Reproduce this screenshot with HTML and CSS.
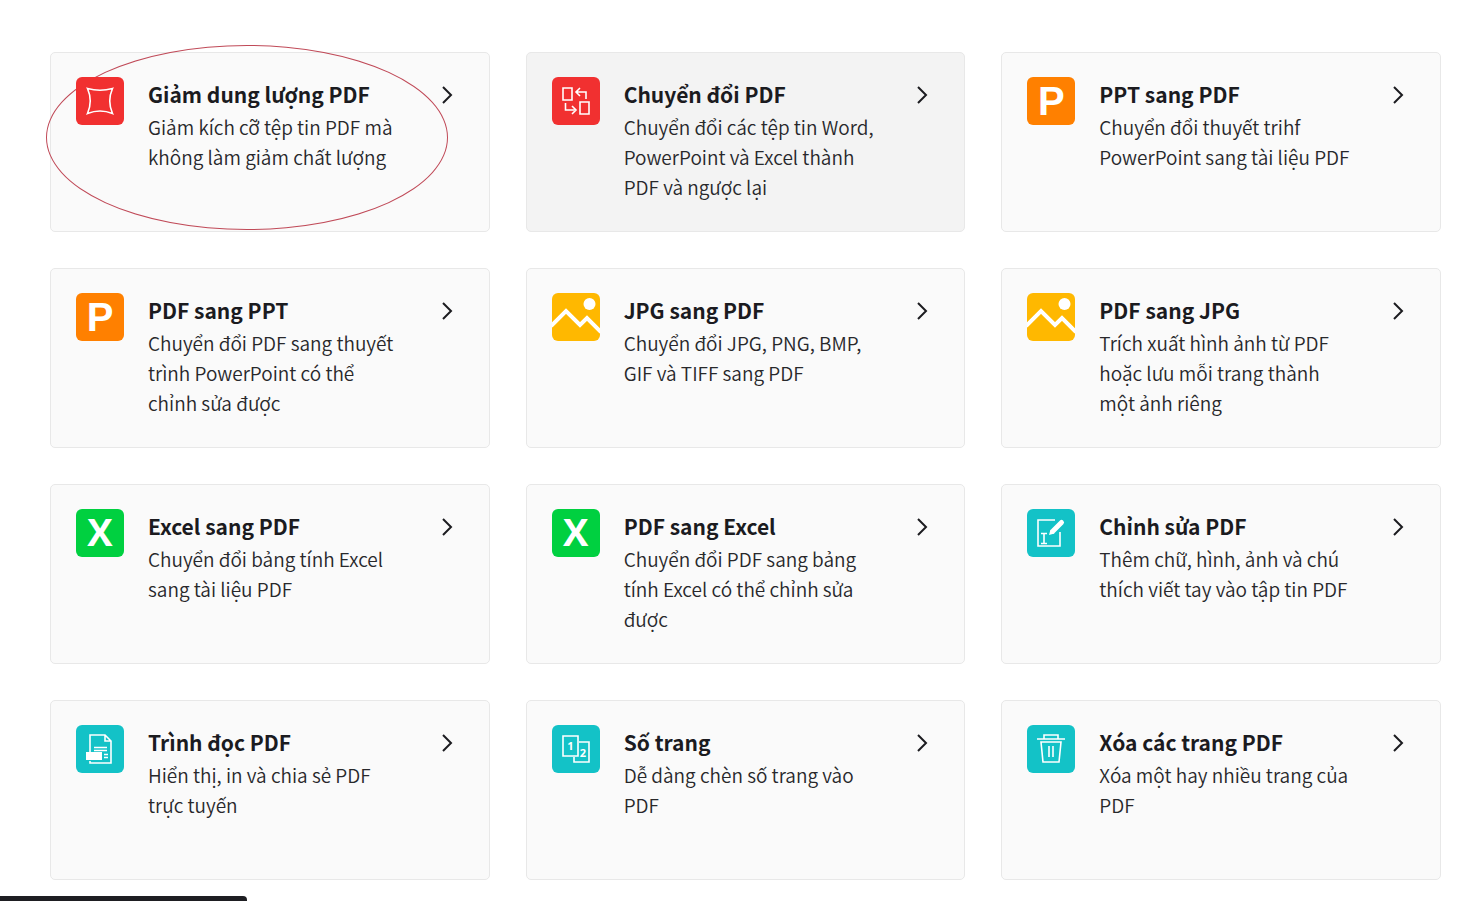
FILE: index.html
```html
<!DOCTYPE html>
<html lang="vi">
<head>
<meta charset="UTF-8">
<meta name="viewport" content="width=device-width, initial-scale=1.0">
<title>PDF</title>
<link rel="stylesheet" href="styles.css">
</head>
<body>
<svg class="sprite" aria-hidden="true">
  <symbol id="arrow" viewBox="0 0 12 20">
    <path d="M2 2l8 8-8 8" fill="none" stroke="#1b1b1f" stroke-width="2"/>
  </symbol>
  <symbol id="image" viewBox="0 0 48 48">
    <circle cx="37.500" cy="11" r="6" fill="#fff" stroke="none"/>
    <path d="M-1 33L14 18l14 14 7-7 14 14" stroke-width="4"/>
  </symbol>
</svg>

<main class="tools">
  <a class="tool" href="#">
    <span class="ring"></span>
    <svg class="icon red" viewBox="0 0 48 48">
      <path d="M11.500 11.500Q24 15 36.500 11.500Q31 24 36.500 36.500Q24 31.500 11.500 36.500Q17 24 11.500 11.500z"/>
    </svg>
    <div class="text">
      <h2>Giảm dung lượng PDF</h2>
      <p>Giảm kích cỡ tệp tin PDF mà không làm giảm chất lượng</p>
    </div>
    <svg class="arrow"><use href="#arrow"/></svg>
  </a>
  <a class="tool active" href="#">
    <svg class="icon red" viewBox="0 0 48 48">
      <path d="M11 11h9v12h-9zM28 25h9v12h-9zM34 22v-7h-9M28 11l-4 4 4 4M13.500 26v7h9M20 29l4 4-4 4"/>
    </svg>
    <div class="text">
      <h2>Chuyển đổi PDF</h2>
      <p>Chuyển đổi các tệp tin Word, PowerPoint và Excel thành PDF và ngược lại</p>
    </div>
    <svg class="arrow"><use href="#arrow"/></svg>
  </a>
  <a class="tool" href="#">
    <span class="icon letter wide orange">P</span>
    <div class="text">
      <h2>PPT sang PDF</h2>
      <p>Chuyển đổi thuyết trihf PowerPoint sang tài liệu PDF</p>
    </div>
    <svg class="arrow"><use href="#arrow"/></svg>
  </a>

  <a class="tool" href="#">
    <span class="icon letter wide orange">P</span>
    <div class="text">
      <h2>PDF sang PPT</h2>
      <p>Chuyển đổi PDF sang thuyết trình PowerPoint có thể chỉnh sửa được</p>
    </div>
    <svg class="arrow"><use href="#arrow"/></svg>
  </a>
  <a class="tool" href="#">
    <svg class="icon yellow"><use href="#image"/></svg>
    <div class="text">
      <h2>JPG sang PDF</h2>
      <p>Chuyển đổi JPG, PNG, BMP, GIF và TIFF sang PDF</p>
    </div>
    <svg class="arrow"><use href="#arrow"/></svg>
  </a>
  <a class="tool" href="#">
    <svg class="icon yellow"><use href="#image"/></svg>
    <div class="text">
      <h2>PDF sang JPG</h2>
      <p>Trích xuất hình ảnh từ PDF hoặc lưu mỗi trang thành một ảnh riêng</p>
    </div>
    <svg class="arrow"><use href="#arrow"/></svg>
  </a>

  <a class="tool" href="#">
    <span class="icon letter green">X</span>
    <div class="text">
      <h2>Excel sang PDF</h2>
      <p>Chuyển đổi bảng tính Excel sang tài liệu PDF</p>
    </div>
    <svg class="arrow"><use href="#arrow"/></svg>
  </a>
  <a class="tool" href="#">
    <span class="icon letter green">X</span>
    <div class="text">
      <h2>PDF sang Excel</h2>
      <p>Chuyển đổi PDF sang bảng tính Excel có thể chỉnh sửa được</p>
    </div>
    <svg class="arrow"><use href="#arrow"/></svg>
  </a>
  <a class="tool" href="#">
    <svg class="icon teal" viewBox="0 0 48 48">
      <path d="M28 11H11v26h22V23M14 24.500h6M14 34.500h6M17 24.500v10"/>
      <path d="M26 22L34.500 13.500" stroke-width="5" stroke-linecap="round"/>
      <path d="M22 26l1.500-5.500 4 4z" fill="#fff" stroke="none"/>
    </svg>
    <div class="text">
      <h2>Chỉnh sửa PDF</h2>
      <p>Thêm chữ, hình, ảnh và chú thích viết tay vào tập tin PDF</p>
    </div>
    <svg class="arrow"><use href="#arrow"/></svg>
  </a>

  <a class="tool" href="#">
    <svg class="icon teal" viewBox="0 0 48 48">
      <path d="M14 27V10h15l6 6v22H14v-2M29 10v6h6"/>
      <path d="M18 22.500h13M18 25.500h13M28 29.500h4M28 32.500h4"/>
      <path d="M10 27h16v8H10z" fill="#fff" stroke="none"/>
    </svg>
    <div class="text">
      <h2>Trình đọc PDF</h2>
      <p>Hiển thị, in và chia sẻ PDF trực tuyến</p>
    </div>
    <svg class="arrow"><use href="#arrow"/></svg>
  </a>
  <a class="tool" href="#">
    <svg class="icon teal" viewBox="0 0 48 48">
      <path d="M11 11h15v20H11zM27 17h10v20H22v-5"/>
      <text x="18.500" y="25" text-anchor="middle" class="digit">1</text>
      <text x="31" y="32" text-anchor="middle" class="digit">2</text>
    </svg>
    <div class="text">
      <h2>Số trang</h2>
      <p>Dễ dàng chèn số trang vào PDF</p>
    </div>
    <svg class="arrow"><use href="#arrow"/></svg>
  </a>
  <a class="tool" href="#">
    <svg class="icon teal" viewBox="0 0 48 48">
      <path d="M10 14h28M17 14v-4h14v4M14 17l2 20h16l2-20zM22 21v11M26 21v11"/>
    </svg>
    <div class="text">
      <h2>Xóa các trang PDF</h2>
      <p>Xóa một hay nhiều trang của PDF</p>
    </div>
    <svg class="arrow"><use href="#arrow"/></svg>
  </a>
</main>
<div class="status"></div>
</body>
</html>
```
FILE: styles.css
```css
* {
  box-sizing: border-box;
}
body {
  margin: 0;
  background: #fff;
  color: #1b1b1f;
  font-family: "Noto Sans CJK SC", "Noto Sans", sans-serif;
}
.sprite {
  position: absolute;
  width: 0;
  height: 0;
}
.tools {
  display: grid;
  grid-template-columns: repeat(3, 1fr);
  gap: 36px;
  padding: 52px 32px 20px 50px;
}
.tool {
  position: relative;
  display: flex;
  align-items: flex-start;
  min-height: 180px;
  padding: 24px 36px 24px 25px;
  background: #fafafa;
  border: 1px solid #e8e8e8;
  border-radius: 5px;
  color: inherit;
  text-decoration: none;
}
.tool.active, .tool:hover {
  background: #f3f3f3;
}
.icon {
  position: relative;
  flex: none;
  width: 48px;
  height: 48px;
  margin-right: 24px;
  border-radius: 6px;
  fill: none;
  stroke: #fff;
  stroke-width: 1.6;
}
.red {
  background: #f13030;
}
.orange {
  background: #ff8000;
}
.yellow {
  background: #ffb800;
}
.green {
  background: #00d040;
}
.teal {
  background: #13c2c7;
}
.letter {
  color: #fff;
  font-family: "Open Sans", sans-serif;
  font-size: 38px;
  font-weight: bold;
  line-height: 45px;
  text-align: center;
}
.letter.wide {
  font-family: "Liberation Sans", Arial, sans-serif;
  font-size: 40px;
  line-height: 48px;
}
.digit {
  fill: #fff;
  stroke: none;
  font-family: "Open Sans", sans-serif;
  font-size: 11px;
  font-weight: bold;
}
.text {
  flex: 1;
  min-width: 0;
}
h2 {
  margin: 0 0 1px;
  font-size: 21px;
  font-weight: bold;
  line-height: 34px;
}
p {
  margin: 0;
  color: #28282b;
  font-size: 19px;
  font-weight: 350;
  line-height: 30px;
}
.arrow {
  flex: none;
  width: 12px;
  height: 20px;
  margin-top: 8px;
  margin-left: 38px;
}
/* oval drawn around the first tool */
.ring {
  position: absolute;
  top: -8px;
  left: -5px;
  width: 402px;
  height: 185px;
  border: 1px solid #c04a58;
  border-radius: 50%;
  pointer-events: none;
}
.status {
  position: fixed;
  left: 0;
  bottom: 0;
  width: 247px;
  height: 5px;
  background: #1e1e22;
  border-top-right-radius: 4px;
}
```
